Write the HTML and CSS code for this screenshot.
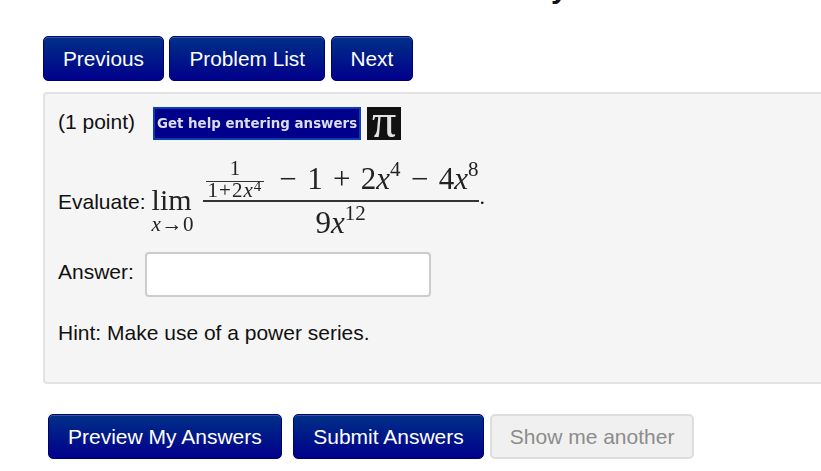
FILE: index.html
```html
<!DOCTYPE html>
<html lang="en">
<head>
<meta charset="utf-8">
<title>Problem</title>
<link rel="stylesheet" href="styles.css">
</head>
<body>
<div class="clip-title"><span class="clip-glyph">y</span></div>
<main class="page">
  <nav class="nav">
    <a class="btn">Previous</a>
    <a class="btn">Problem List</a>
    <a class="btn">Next</a>
  </nav>
  <section class="panel">
    <div class="head-row">
      <span>(1 point)</span>
      <span class="help-img"><span class="help-text">Get help entering answers</span></span>
      <span class="pi-img"><span class="pi-glyph">π</span></span>
    </div>
    <div class="eval-row">
      <span class="eval-label">Evaluate:</span>
      <span class="math">
        <span class="limit"><span class="lim">lim</span><span class="under"><i>x</i>→0</span></span>
        <span class="frac">
          <span class="num">
            <span class="frac small">
              <span class="num n1">1</span>
              <span class="den d1">1+2<i>x</i><sup>4</sup></span>
            </span>
            <span class="expr">− 1 + 2<i>x</i><sup>4</sup> − 4<i>x</i><sup>8</sup></span>
          </span>
          <span class="den main-den">9<i>x</i><sup>12</sup></span>
        </span>
        <span class="dot">.</span>
      </span>
    </div>
    <div class="answer-row">
      <label for="ans" class="answer-label">Answer:</label>
      <input id="ans" class="answer" type="text">
    </div>
    <p class="hint">Hint: Make use of a power series.</p>
  </section>
  <div class="actions">
    <a class="btn">Preview My Answers</a>
    <a class="btn gap-wide">Submit Answers</a>
    <a class="btn disabled">Show me another</a>
  </div>
</main>
</body>
</html>
```
FILE: styles.css
```css
html, body { margin: 0; padding: 0; background: #fff; }
body {
  width: 821px; height: 471px; overflow: hidden; position: relative;
  font-family: "Liberation Sans", Arial, sans-serif; font-size: 21px; color: #111;
}
.clip-title { position: absolute; left: 551px; top: -29px; font: bold 30px "Liberation Sans", sans-serif; color: #111; }
.page { padding: 36px 0 0 43px; }
.nav { display: flex; gap: 5.5px; font-size: 20.8px; }
.btn {
  display: block; box-sizing: border-box; height: 45px; line-height: 43px; padding: 0 19px;
  color: #fff; white-space: nowrap;
  background: linear-gradient(#003087, #00008b);
  border: 1px solid #00006e; border-radius: 5px;
  box-shadow: inset 0 1px 0 rgba(255,255,255,.2);
}
.panel {
  box-sizing: border-box; width: 800px; height: 292px; margin-top: 11px; padding: 13px 13px 0;
  background: #f5f5f5; border: 2px solid #e3e3e3; border-radius: 4px;
}
.head-row { display: flex; align-items: flex-start; height: 33px; line-height: 30px; }
.help-img {
  box-sizing: border-box; width: 208px; height: 33px; margin-left: 18px;
  display: flex; align-items: center; justify-content: center;
  background: #00008b; border: 2px solid #0a3fb0;
}
.help-text {
  font: bold 13.4px "DejaVu Sans", sans-serif; color: #dcdcea; white-space: nowrap;
  filter: blur(.5px);
}
.pi-img {
  width: 34px; height: 33px; margin-left: 6px; background: #111;
  display: flex; align-items: center; justify-content: center;
}
.pi-glyph { font: 48px/33px "Liberation Serif", serif; color: #e2e2e2; filter: blur(.4px); margin-top: -7px; }
.eval-row { display: flex; align-items: flex-start; height: 91px; margin-top: 11px; }
.eval-label { margin-top: 39px; line-height: 24px; }
.math {
  display: flex; align-items: flex-start; margin-left: 6px;
  font-family: "Liberation Serif", "DejaVu Serif", serif; font-size: 31px; color: #222; line-height: 31px;
  filter: blur(.3px);
}
.math i { font-style: italic; }
.math sup { font-size: 21px; line-height: 0; vertical-align: 13px; }
.limit { display: flex; flex-direction: column; align-items: flex-start; margin-top: 35px; width: 45px; }
.lim { font-size: 30px; line-height: 27px; }
.under { font-size: 21px; line-height: 22px; white-space: nowrap; letter-spacing: .6px; }
.frac { display: inline-flex; flex-direction: column; align-items: stretch; width: 276px; margin-left: 6px; }
.num { display: flex; align-items: flex-start; height: 49px; }
.den { display: block; text-align: center; border-top: 2px solid #333; }
.main-den { padding-top: 5px; }
.frac.small { width: 60px; margin: 8px 0 0 3px; font-size: 21px; }
.n1 { height: auto; justify-content: center; line-height: 18px; padding-bottom: 4px; }
.frac.small .d1 { border-top-width: 1.5px; line-height: 17px; letter-spacing: 1px; white-space: nowrap; }
.frac.small sup { font-size: 15px; vertical-align: 6px; }
.expr { margin: 12px 0 0 15px; white-space: pre; word-spacing: 2.6px; }
.dot { margin: 35px 0 0 1px; color: #111; font-size: 22px; line-height: 22px; }
.answer-row { display: flex; align-items: flex-start; gap: 11px; margin-top: 10px; }
.answer-label { line-height: 40px; }
.answer {
  box-sizing: border-box; width: 286px; height: 45px; padding: 0 8px; margin: 0;
  background: #fff; border: 2px solid #ccc; border-radius: 4px; outline: none;
}
.hint { margin: 24px 0 0; line-height: 24px; }
.actions { display: flex; gap: 6px; margin: 30px 0 0 5px; }
.gap-wide { margin-left: 5px; padding: 0 19.5px; }
.btn.disabled {
  color: #8c8c8c; background: #f0f0f0; border: 2px solid #ddd; box-shadow: none; line-height: 41px; padding: 0 17.5px;
}
```
